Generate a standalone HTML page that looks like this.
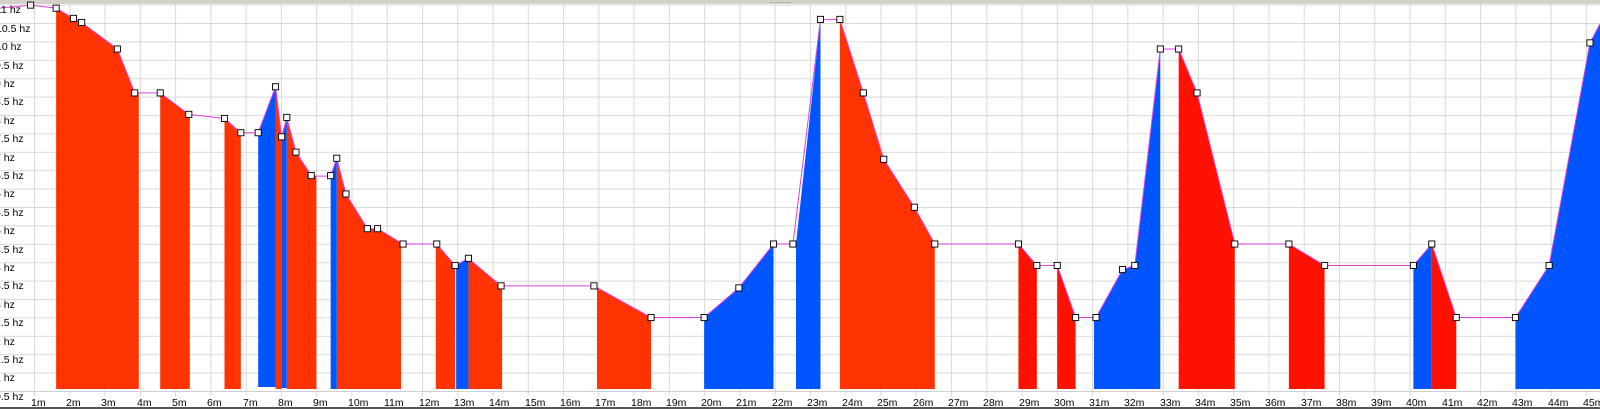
<!DOCTYPE html>
<html><head><meta charset="utf-8"><style>
html,body{margin:0;padding:0;background:#fff;overflow:hidden}
svg{display:block}
text{font-family:"Liberation Sans","DejaVu Sans",sans-serif;font-size:10.5px;fill:#000}
</style></head><body>
<svg width="1600" height="409" viewBox="0 0 1600 409" xmlns="http://www.w3.org/2000/svg">
<defs>
<pattern id="gv" patternUnits="userSpaceOnUse" x="34" y="0" width="35.27" height="409"><rect x="0" y="0" width="1" height="409" fill="#d9d9d9"/></pattern>
<pattern id="gh" patternUnits="userSpaceOnUse" x="0" y="23" width="1600" height="18.4"><rect x="0" y="0" width="1600" height="1" fill="#d9d9d9"/></pattern>
</defs>
<rect width="1600" height="409" fill="#fff"/>
<rect x="0" y="4" width="1600" height="388" fill="url(#gh)"/>
<rect x="34" y="4" width="1566" height="392" fill="url(#gv)"/>
<rect x="0" y="391" width="1600" height="1" fill="#d0d0d0"/>
<rect x="0" y="0" width="1600" height="4" fill="#d4d0c8"/>
<text x="770" y="4" style="font-size:6px;letter-spacing:1px">·······</text>
<rect x="0" y="407" width="1600" height="2" fill="#555"/>

<g transform="scale(1.0205,1.021)">
<g fill="#ff3300">
<polygon points="55,8 72,18 80,22 115,48 132,91 136,91 136,381 55,381"/>
<polygon points="157,91 185,112 186,113 186,381 157,381"/>
<polygon points="220,116 236,131 236,381 220,381"/>
<polygon points="270,85 276,134.5 276,381 270,381"/>
<polygon points="281,115 290,149 305.5,172.5 310,172.5 310,381 281,381"/>
<polygon points="330,155 339,190 360,224 370,224 393,238 393,381 330,381"/>
<polygon points="427,239 446,260 446,381 427,381"/>
<polygon points="459,253 491,280 492,280 492,381 459,381"/>
<polygon points="585,282 638,311 638,381 585,381"/>
<polygon points="823,19 846,91 866,156 896,203 916,239 916,381 823,381"/>
</g>
<g fill="#ff1100">
<polygon points="998,239 1016,260 1016,381 998,381"/>
<polygon points="1036,260 1054,311 1054,381 1036,381"/>
<polygon points="1155,48 1173,91 1210,239 1210,381 1155,381"/>
<polygon points="1263,239 1298,260 1298,381 1263,381"/>
<polygon points="1403,239 1427,311 1427,381 1403,381"/>
</g>
<g fill="#0055ff">
<polygon points="253,130 270,85 270,379 253,379"/>
<polygon points="276,134.5 281,115 281,380 276,380"/>
<polygon points="324,172.5 330,155 330,381 324,381"/>
<polygon points="447,260 459,253 459,381 447,381"/>
<polygon points="690,311 724,282 758,239 758,381 690,381"/>
<polygon points="780,239 804,19 804,381 780,381"/>
<polygon points="1072,311 1074,311 1100,264 1112,260 1137,48 1137,381 1072,381"/>
<polygon points="1385,260 1403,239 1403,381 1385,381"/>
<polygon points="1485,311 1518,260 1558,42 1575,10 1575,381 1485,381"/>
</g>
<polyline fill="none" stroke="#e040e0" stroke-width="1" points="0,8 30,5 55,8 72,18 80,22 115,48 132,91 157,91 185,112 220,116 236,130 253,130 270,85 276,134.5 281,115 290,149 305.5,172.5 324,172.5 330,155 339,190 360,224 370,224 395,239 428,239 446,260 459,253 491,280 582,280 638,311 690,311 724,282 758,239 777,239 804,19 823,19 846,91 866,156 896,203 916,239 998,239 1016,260 1036,260 1054,311 1074,311 1100,264 1112,260 1137,48 1155,48 1173,91 1210,239 1263,239 1298,260 1385,260 1403,239 1427,311 1485,311 1518,260 1558,42 1575,10"/>
<g fill="#fff" stroke="#000" stroke-width="0.9">
<rect x="27" y="2" width="6" height="6"/><rect x="52" y="5" width="6" height="6"/><rect x="69" y="15" width="6" height="6"/><rect x="77" y="19" width="6" height="6"/><rect x="112" y="45" width="6" height="6"/><rect x="129" y="88" width="6" height="6"/><rect x="154" y="88" width="6" height="6"/><rect x="182" y="109" width="6" height="6"/><rect x="217" y="113" width="6" height="6"/><rect x="233" y="127" width="6" height="6"/><rect x="250" y="127" width="6" height="6"/><rect x="267" y="82" width="6" height="6"/><rect x="273" y="131" width="6" height="6"/><rect x="278" y="112" width="6" height="6"/><rect x="287" y="146" width="6" height="6"/><rect x="302" y="169" width="6" height="6"/><rect x="321" y="169" width="6" height="6"/><rect x="327" y="152" width="6" height="6"/><rect x="336" y="187" width="6" height="6"/><rect x="357" y="221" width="6" height="6"/><rect x="367" y="221" width="6" height="6"/><rect x="392" y="236" width="6" height="6"/><rect x="425" y="236" width="6" height="6"/><rect x="443" y="257" width="6" height="6"/><rect x="456" y="250" width="6" height="6"/><rect x="488" y="277" width="6" height="6"/><rect x="579" y="277" width="6" height="6"/><rect x="635" y="308" width="6" height="6"/><rect x="687" y="308" width="6" height="6"/><rect x="721" y="279" width="6" height="6"/><rect x="755" y="236" width="6" height="6"/><rect x="774" y="236" width="6" height="6"/><rect x="801" y="16" width="6" height="6"/><rect x="820" y="16" width="6" height="6"/><rect x="843" y="88" width="6" height="6"/><rect x="863" y="153" width="6" height="6"/><rect x="893" y="200" width="6" height="6"/><rect x="913" y="236" width="6" height="6"/><rect x="995" y="236" width="6" height="6"/><rect x="1013" y="257" width="6" height="6"/><rect x="1033" y="257" width="6" height="6"/><rect x="1051" y="308" width="6" height="6"/><rect x="1071" y="308" width="6" height="6"/><rect x="1097" y="261" width="6" height="6"/><rect x="1109" y="257" width="6" height="6"/><rect x="1134" y="45" width="6" height="6"/><rect x="1152" y="45" width="6" height="6"/><rect x="1170" y="88" width="6" height="6"/><rect x="1207" y="236" width="6" height="6"/><rect x="1260" y="236" width="6" height="6"/><rect x="1295" y="257" width="6" height="6"/><rect x="1382" y="257" width="6" height="6"/><rect x="1400" y="236" width="6" height="6"/><rect x="1424" y="308" width="6" height="6"/><rect x="1482" y="308" width="6" height="6"/><rect x="1515" y="257" width="6" height="6"/><rect x="1555" y="39" width="6" height="6"/>
</g>
</g>

<g>
<text x="-4" y="13">11 hz</text><text x="-4" y="32">10.5 hz</text><text x="-4" y="50">10 hz</text><text x="-5" y="69">9.5 hz</text><text x="-5" y="87">9 hz</text><text x="-5" y="105">8.5 hz</text><text x="-5" y="124">8 hz</text><text x="-5" y="142">7.5 hz</text><text x="-5" y="161">7 hz</text><text x="-5" y="179">6.5 hz</text><text x="-5" y="197">6 hz</text><text x="-5" y="216">5.5 hz</text><text x="-5" y="234">5 hz</text><text x="-5" y="253">4.5 hz</text><text x="-5" y="271">4 hz</text><text x="-5" y="289">3.5 hz</text><text x="-5" y="308">3 hz</text><text x="-5" y="326">2.5 hz</text><text x="-5" y="345">2 hz</text><text x="-5" y="363">1.5 hz</text><text x="-5" y="381">1 hz</text><text x="-5" y="400">0.5 hz</text>
</g>
<g transform="translate(-6,0)">
<text x="37" y="406">1m</text><text x="72" y="406">2m</text><text x="107" y="406">3m</text><text x="143" y="406">4m</text><text x="178" y="406">5m</text><text x="213" y="406">6m</text><text x="249" y="406">7m</text><text x="284" y="406">8m</text><text x="319" y="406">9m</text><text x="354" y="406">10m</text><text x="390" y="406">11m</text><text x="425" y="406">12m</text><text x="460" y="406">13m</text><text x="495" y="406">14m</text><text x="531" y="406">15m</text><text x="566" y="406">16m</text><text x="601" y="406">17m</text><text x="637" y="406">18m</text><text x="672" y="406">19m</text><text x="707" y="406">20m</text><text x="742" y="406">21m</text><text x="778" y="406">22m</text><text x="813" y="406">23m</text><text x="848" y="406">24m</text><text x="883" y="406">25m</text><text x="919" y="406">26m</text><text x="954" y="406">27m</text><text x="989" y="406">28m</text><text x="1025" y="406">29m</text><text x="1060" y="406">30m</text><text x="1095" y="406">31m</text><text x="1130" y="406">32m</text><text x="1166" y="406">33m</text><text x="1201" y="406">34m</text><text x="1236" y="406">35m</text><text x="1271" y="406">36m</text><text x="1307" y="406">37m</text><text x="1342" y="406">38m</text><text x="1377" y="406">39m</text><text x="1412" y="406">40m</text><text x="1448" y="406">41m</text><text x="1483" y="406">42m</text><text x="1518" y="406">43m</text><text x="1554" y="406">44m</text><text x="1589" y="406">45m</text>
</g>
</svg>
</body></html>
